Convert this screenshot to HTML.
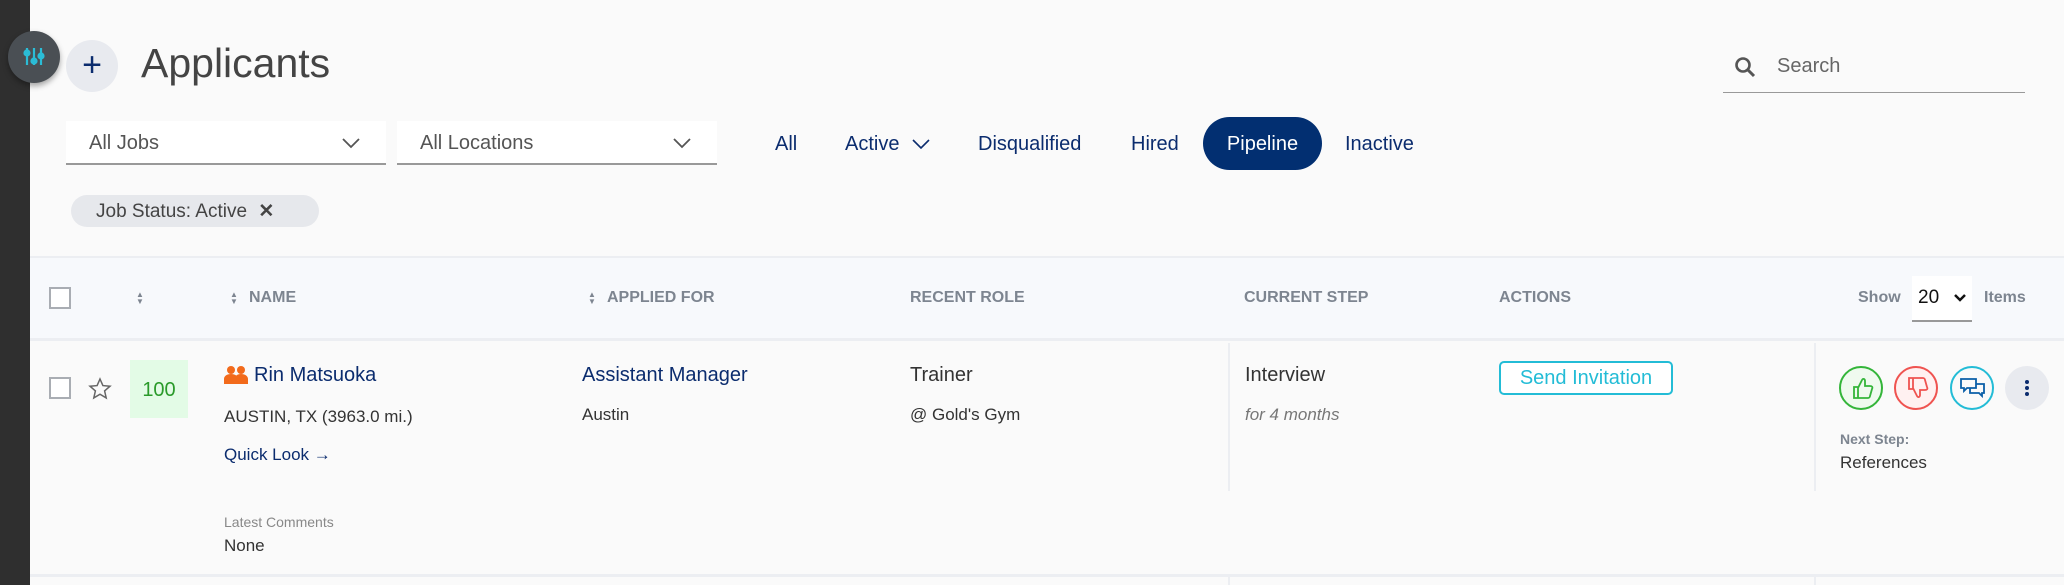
<!DOCTYPE html>
<html><head><meta charset="utf-8"><style>
*{margin:0;padding:0;box-sizing:border-box}
body{width:2064px;height:585px;background:#fafafa;font-family:"Liberation Sans",sans-serif;position:relative;overflow:hidden;color:#333}
.a{position:absolute;white-space:nowrap}
.nav{color:#0b2c6e;font-size:20px}
.hd{color:#7d8590;font-size:16px;font-weight:bold;top:289px}
.sa{position:absolute;top:291px;color:#7d8590;font-size:8px;line-height:7px}
.circ{position:absolute;width:44px;height:44px;border-radius:50%;top:366px}
</style></head><body>
<div class="a" style="left:0;top:0;width:30px;height:585px;background:#2f2f2f"></div>
<div class="a" style="left:8px;top:31px;width:52px;height:52px;border-radius:50%;background:#4a4f54;box-shadow:0 3px 6px rgba(0,0,0,.35)">
<svg width="52" height="52" viewBox="0 0 52 52"><g stroke="#2bbcd6" stroke-width="2.2" fill="#2bbcd6"><line x1="19" y1="17" x2="19" y2="34"/><line x1="26" y1="17" x2="26" y2="34"/><line x1="33" y1="17" x2="33" y2="34"/><circle cx="19" cy="22" r="2.5"/><circle cx="26" cy="30" r="2.5"/><circle cx="33" cy="25" r="2.5"/></g></svg></div>
<div class="a" style="left:66px;top:40px;width:52px;height:52px;border-radius:50%;background:#e8eaef;color:#0b2c6e;font-size:34px;text-align:center;line-height:50px">+</div>
<div class="a" style="left:141px;top:40px;font-size:41px;color:#444;font-weight:300">Applicants</div>
<svg class="a" style="left:1733px;top:55px" width="24" height="24" viewBox="0 0 24 24"><circle cx="10" cy="10" r="6.5" stroke="#555" stroke-width="2.6" fill="none"/><line x1="15" y1="15" x2="21" y2="21" stroke="#555" stroke-width="3"/></svg>
<div class="a" style="left:1777px;top:55px;font-size:20px;color:#666">Search</div>
<div class="a" style="left:1723px;top:92px;width:302px;height:1px;background:#999"></div>
<div class="a" style="left:66px;top:121px;width:320px;height:44px;background:#fff;border-bottom:2px solid #999"></div>
<div class="a" style="left:89px;top:132px;font-size:20px;color:#555">All Jobs</div>
<svg class="a" style="left:341px;top:136px" width="20" height="14"><path d="M2 3l8 8 8-8" stroke="#555" stroke-width="1.8" fill="none"/></svg>
<div class="a" style="left:397px;top:121px;width:320px;height:44px;background:#fff;border-bottom:2px solid #999"></div>
<div class="a" style="left:420px;top:132px;font-size:20px;color:#555">All Locations</div>
<svg class="a" style="left:672px;top:136px" width="20" height="14"><path d="M2 3l8 8 8-8" stroke="#555" stroke-width="1.8" fill="none"/></svg>
<div class="a nav" style="left:775px;top:133px">All</div>
<div class="a nav" style="left:845px;top:133px">Active</div>
<svg class="a" style="left:911px;top:137px" width="20" height="14"><path d="M2 3l8 8 8-8" stroke="#0b2c6e" stroke-width="1.6" fill="none"/></svg>
<div class="a nav" style="left:978px;top:133px">Disqualified</div>
<div class="a nav" style="left:1131px;top:133px">Hired</div>
<div class="a" style="left:1203px;top:117px;width:119px;height:53px;border-radius:27px;background:#022f71;color:#fff;font-size:20px;text-align:center;line-height:55px">Pipeline</div>
<div class="a nav" style="left:1345px;top:133px">Inactive</div>
<div class="a" style="left:71px;top:195px;width:248px;height:32px;border-radius:16px;background:#e6e8ec;font-size:19px;color:#444;line-height:34px;padding-left:25px">Job Status: Active <b style="margin-left:6px;font-size:19px">✕</b></div>
<div class="a" style="left:30px;top:256px;width:2034px;height:85px;background:#f7f9fc;border-top:2px solid #eceef2;border-bottom:3px solid #eceef2"></div>
<div class="a" style="left:49px;top:287px;width:22px;height:22px;border:2px solid #a9adb3;background:#fff"></div>
<div class="sa" style="left:136px">▲<br>▼</div>
<div class="sa" style="left:230px">▲<br>▼</div>
<div class="a hd" style="left:249px">NAME</div>
<div class="sa" style="left:588px">▲<br>▼</div>
<div class="a hd" style="left:607px">APPLIED FOR</div>
<div class="a hd" style="left:910px">RECENT ROLE</div>
<div class="a hd" style="left:1244px">CURRENT STEP</div>
<div class="a hd" style="left:1499px">ACTIONS</div>
<div class="a hd" style="left:1858px">Show</div>
<div class="a" style="left:1912px;top:276px;width:60px;height:46px;background:#fff;border-bottom:2px solid #999;font-size:19px;color:#111;padding:11px 0 0 6px">20</div>
<svg class="a" style="left:1953px;top:293px" width="14" height="10"><path d="M2 2l5 5 5-5" stroke="#111" stroke-width="2.5" fill="none"/></svg>
<div class="a hd" style="left:1984px">Items</div>
<div class="a" style="left:49px;top:377px;width:22px;height:22px;border:2px solid #a9adb3;background:#fff"></div>
<svg class="a" style="left:88px;top:377px" width="24" height="24" viewBox="0 0 24 24"><path d="M12 2l2.9 6.6 7.1.6-5.4 4.7 1.6 7-6.2-3.7-6.2 3.7 1.6-7L2 9.2l7.1-.6z" fill="none" stroke="#666" stroke-width="1.5"/></svg>
<div class="a" style="left:130px;top:360px;width:58px;height:58px;background:#e3fbe6;color:#2a9a2a;font-size:20px;text-align:center;line-height:60px">100</div>
<svg class="a" style="left:223px;top:365px" width="26" height="20" viewBox="0 0 26 20"><circle cx="8" cy="5" r="4" fill="#f26a1b"/><circle cx="18" cy="5" r="4" fill="#f26a1b"/><path d="M1 19v-5c0-3 3-5 7-5s7 2 7 5v5z M12 19v-5c0-3 2-5 6-5s7 2 7 5v5z" fill="#f26a1b"/></svg>
<div class="a" style="left:254px;top:364px;font-size:20px;color:#0b2c6e">Rin Matsuoka</div>
<div class="a" style="left:224px;top:407px;font-size:17px;color:#333">AUSTIN, TX (3963.0 mi.)</div>
<div class="a" style="left:224px;top:445px;font-size:17px;color:#0b2c6e">Quick Look →</div>
<div class="a" style="left:582px;top:364px;font-size:20px;color:#0b2c6e">Assistant Manager</div>
<div class="a" style="left:582px;top:405px;font-size:17px;color:#333">Austin</div>
<div class="a" style="left:910px;top:364px;font-size:20px;color:#333">Trainer</div>
<div class="a" style="left:910px;top:405px;font-size:17px;color:#333">@ Gold's Gym</div>
<div class="a" style="left:1228px;top:343px;width:2px;height:148px;background:#eceef2"></div>
<div class="a" style="left:1245px;top:364px;font-size:20px;color:#333">Interview</div>
<div class="a" style="left:1245px;top:405px;font-size:17px;color:#777;font-style:italic">for 4 months</div>
<div class="a" style="left:1499px;top:361px;width:174px;height:34px;border:2px solid #23bcd6;border-radius:5px;color:#23bcd6;font-size:20px;text-align:center;line-height:31px;background:#fff">Send Invitation</div>
<div class="a" style="left:1814px;top:343px;width:2px;height:148px;background:#eceef2"></div>
<div class="circ" style="left:1839px;border:2px solid #34b53a;background:#effaef"><svg width="40" height="40" viewBox="0 0 40 40"><path d="M13 19h4v11h-4z M17 20l4-8c1-2 3-1 3 1v5h5c2 0 3 1 2 3l-2 7c0 1-1 2-2 2h-10" fill="none" stroke="#34b53a" stroke-width="1.8"/></svg></div>
<div class="circ" style="left:1894px;border:2px solid #ef5350;background:#fff1f1"><svg width="40" height="40" viewBox="0 0 40 40"><path d="M13 21h4v-11h-4z M17 20l4 8c1 2 3 1 3-1v-5h5c2 0 3-1 2-3l-2-7c0-1-1-2-2-2h-10" fill="none" stroke="#ef5350" stroke-width="1.8"/></svg></div>
<div class="circ" style="left:1950px;border:2px solid #23bcd6;background:#fafafa"><svg width="40" height="40" viewBox="0 0 40 40"><path d="M9 11h15v9h-9l-3 3v-3h-3z M18 20v5h9l3 3v-3h2v-9h-8" fill="none" stroke="#0b5fa8" stroke-width="1.8"/></svg></div>
<div class="circ" style="left:2005px;background:#e8eaef"><svg width="44" height="44"><g fill="#0b2c6e"><circle cx="22" cy="16" r="2"/><circle cx="22" cy="22" r="2"/><circle cx="22" cy="28" r="2"/></g></svg></div>
<div class="a" style="left:1840px;top:431px;font-size:14px;font-weight:bold;color:#7d8590">Next Step:</div>
<div class="a" style="left:1840px;top:453px;font-size:17px;color:#333">References</div>
<div class="a" style="left:224px;top:514px;font-size:14px;color:#888">Latest Comments</div>
<div class="a" style="left:224px;top:536px;font-size:17px;color:#333">None</div>
<div class="a" style="left:30px;top:574px;width:2034px;height:3px;background:#eceef2"></div>
<div class="a" style="left:1228px;top:577px;width:2px;height:8px;background:#eceef2"></div>
<div class="a" style="left:1814px;top:577px;width:2px;height:8px;background:#eceef2"></div>
</body></html>
